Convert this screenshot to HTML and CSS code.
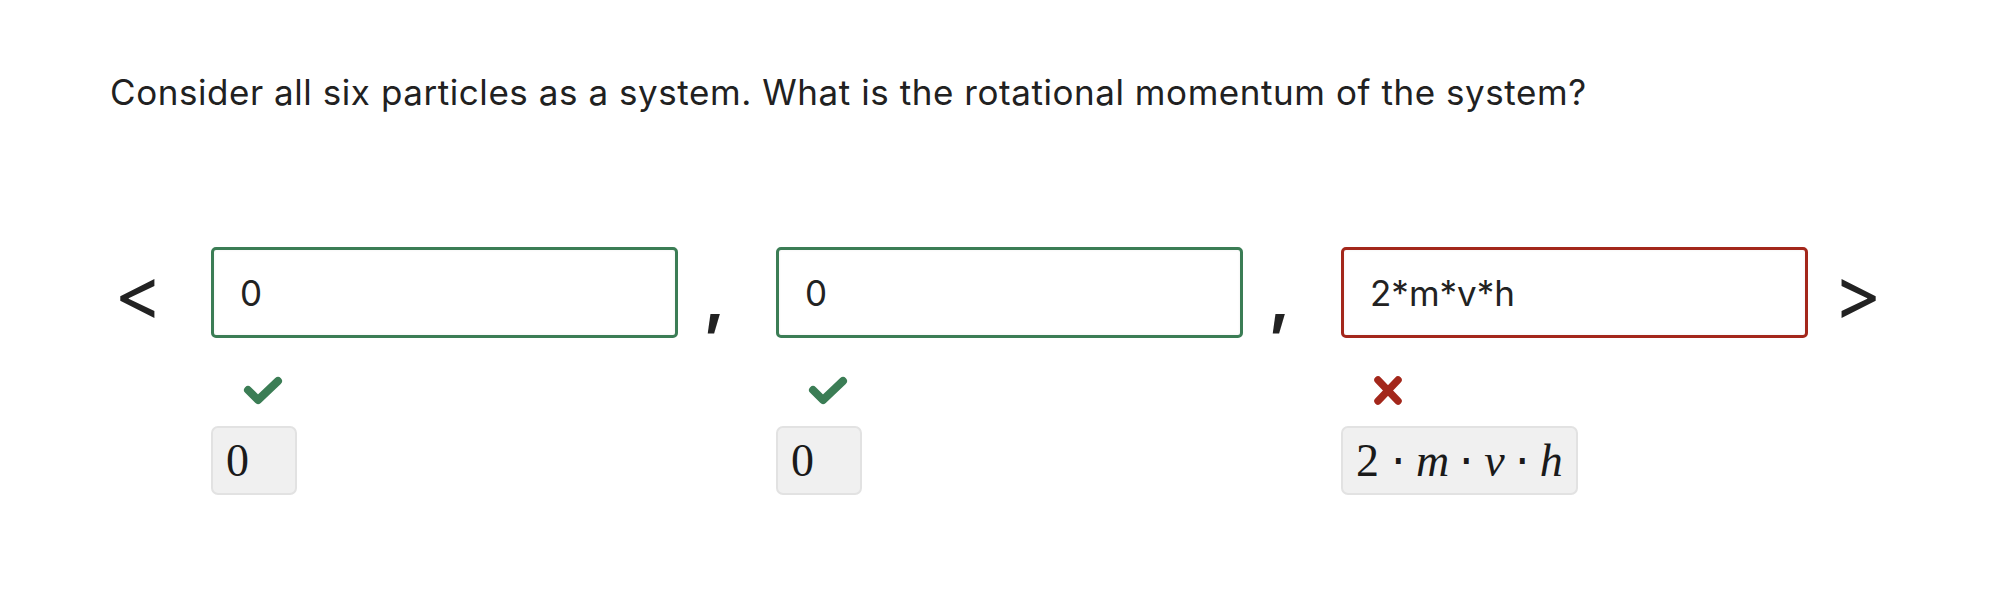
FILE: index.html
```html
<!DOCTYPE html>
<html>
<head>
<meta charset="utf-8">
<link rel="stylesheet" href="styles.css">
</head>
<body>
<div class="page">
  <p class="question">Consider all six particles as a system. What is the rotational momentum of the system?</p>
  <div class="vector">
    <span class="sym lt">&lt;</span>
    <div class="field">
      <div class="input ok">0</div>
      <div class="mark">
        <svg width="40" height="30" viewBox="0 0 40 30"><polyline points="5,14 15,24 35,5" fill="none" stroke="#3b7d55" stroke-width="8" stroke-linecap="round" stroke-linejoin="round"/></svg>
      </div>
      <div class="math"><span class="mn">0</span></div>
    </div>
    <span class="sym comma">,</span>
    <div class="field">
      <div class="input ok">0</div>
      <div class="mark">
        <svg width="40" height="30" viewBox="0 0 40 30"><polyline points="5,14 15,24 35,5" fill="none" stroke="#3b7d55" stroke-width="8" stroke-linecap="round" stroke-linejoin="round"/></svg>
      </div>
      <div class="math"><span class="mn">0</span></div>
    </div>
    <span class="sym comma">,</span>
    <div class="field">
      <div class="input bad">2*m*v*h</div>
      <div class="mark">
        <svg width="40" height="30" viewBox="0 0 40 30"><path d="M5,4 L25,25 M25,4 L5,25" fill="none" stroke="#a3271b" stroke-width="7.5" stroke-linecap="round"/></svg>
      </div>
      <div class="math"><span class="mn">2</span><span class="mo">⋅</span><span class="mi">m</span><span class="mo">⋅</span><span class="mi">v</span><span class="mo">⋅</span><span class="mi">h</span></div>
    </div>
    <span class="sym gt">&gt;</span>
  </div>
</div>
</body>
</html>
```
FILE: styles.css
```css
html, body {
  margin: 0;
  padding: 0;
  background: #ffffff;
}
.page {
  padding: 72px 0 0 110px;
  font-family: Inter, "Noto Sans", sans-serif;
  color: #212121;
}
.question {
  margin: 0;
  font-size: 35px;
  letter-spacing: 0.56px;
  line-height: 40px;
}
.vector {
  display: flex;
  align-items: flex-start;
  margin-top: 135px;
}
.sym {
  height: 91px;
  display: flex;
  align-items: center;
  font-size: 74px;
  line-height: 1;
  color: #222;
}
.lt {
  width: 101px;
  padding-left: 4px;
  box-sizing: border-box;
}
.comma {
  width: 98px;
  padding-left: 26px;
  padding-top: 10px;
  box-sizing: border-box;
  font-weight: 700;
  font-size: 64px;
}
.gt {
  padding-left: 25px;
}
.field {
  display: flex;
  flex-direction: column;
  align-items: flex-start;
}
.input {
  width: 467px;
  height: 91px;
  box-sizing: border-box;
  border: 3px solid;
  border-radius: 5px;
  padding-left: 26px;
  display: flex;
  align-items: center;
  font-size: 35px;
  color: #222;
  box-shadow: inset 0 0 3px rgba(0,0,0,0.06);
}
.input.ok { border-color: #3b7d55; }
.input.bad { border-color: #a3271b; }
.mark {
  margin-top: 38px;
  height: 30px;
  padding-left: 32px;
}
.mark svg { display: block; }
.math {
  margin-top: 20px;
  min-width: 86px;
  height: 69px;
  box-sizing: border-box;
  padding: 0 13px;
  background: #f0f0f0;
  border: 2px solid #e2e2e2;
  border-radius: 7px;
  display: flex;
  align-items: center;
  font-family: "Liberation Serif", "Times New Roman", serif;
  font-size: 46px;
  color: #1a1a1a;
}
.math .mn { padding-right: 2px; }
.math .mi { font-style: italic; }
.math .mo { margin: 0 10px; }
```
